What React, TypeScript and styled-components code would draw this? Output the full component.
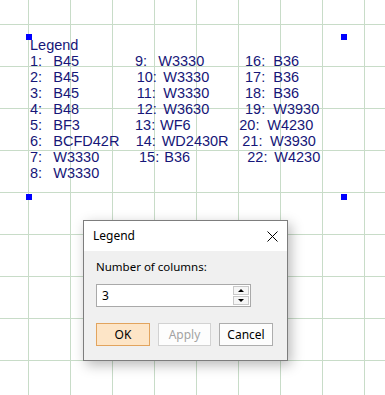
import React from 'react';
import styled, { createGlobalStyle } from 'styled-components';

const Global = createGlobalStyle`
  html, body { margin: 0; padding: 0; }
  body { width: 385px; height: 395px; overflow: hidden; background: #fff; }
`;

const Canvas = styled.div`
  position: relative;
  width: 385px;
  height: 395px;
  box-sizing: border-box;
  padding: 37px 0 0 30px;
  background-color: #fff;
  background-image:
    linear-gradient(to right, #c8dcc8 1px, transparent 1px),
    linear-gradient(to bottom, #c8dcc8 1px, transparent 1px);
  background-size: 42px 42px;
  background-position: 28px 24px;
  font-family: "Liberation Sans", Arial, sans-serif;
`;

const LegendBlock = styled.div`
  color: #161678;
  font-size: 14.5px;
  line-height: 16px;
`;

const LegendTitle = styled.div`
  white-space: nowrap;
`;

const Columns = styled.div`
  display: grid;
  grid-template-columns: 103px 106px auto;
`;

const Column = styled.div`
  display: flex;
  flex-direction: column;
`;

const Entry = styled.div<{ $indent: number }>`
  display: flex;
  white-space: nowrap;
  padding-left: ${(p) => p.$indent}px;
`;

const Num = styled.span<{ $w: number }>`
  flex: none;
  width: ${(p) => p.$w}px;
`;

const Handle = styled.div<{ $x: number; $y: number }>`
  position: absolute;
  left: ${(p) => p.$x}px;
  top: ${(p) => p.$y}px;
  width: 6px;
  height: 6px;
  background: #0000ff;
`;

const Dialog = styled.div`
  position: absolute;
  left: 83px;
  top: 220px;
  width: 205px;
  height: 141px;
  box-sizing: border-box;
  border: 1px solid #7d7d7d;
  background: #f0f0f0;
  box-shadow: 3px 4px 12px rgba(0, 0, 0, 0.28);
  display: flex;
  flex-direction: column;
  font-family: "Noto Sans", "Open Sans", sans-serif;
  font-size: 11.5px;
  color: #000;
`;

const TitleBar = styled.div`
  height: 30px;
  flex: none;
  background: #fff;
  display: flex;
  align-items: center;
  justify-content: space-between;
  padding: 0 9px 0 9px;
`;

const TitleText = styled.span`
  font-size: 12px;
  padding-bottom: 1px;
`;

const CloseIcon = styled.svg`
  width: 11px;
  height: 11px;
  display: block;
`;

const Body = styled.div`
  display: flex;
  flex-direction: column;
  padding: 8px 0 0 12px;
`;

const Label = styled.div`
  line-height: 16px;
  height: 16px;
`;

const SpinBox = styled.div`
  margin-top: 9px;
  width: 155px;
  height: 23px;
  box-sizing: border-box;
  border: 1px solid #a9a9a9;
  background: #fff;
  display: flex;
  align-items: stretch;
`;

const SpinValue = styled.div`
  flex: 1;
  display: flex;
  align-items: center;
  padding-left: 5px;
  font-size: 12px;
`;

const SpinButtons = styled.div`
  width: 16px;
  display: flex;
  flex-direction: column;
  gap: 1px;
  padding: 1px 1px 1px 0;
`;

const SpinButton = styled.div`
  flex: 1;
  box-sizing: border-box;
  border: 1px solid #c9c9c9;
  background: #f6f6f6;
  display: flex;
  align-items: center;
  justify-content: center;
`;

const Arrow = styled.div<{ $up: boolean }>`
  width: 0;
  height: 0;
  border-left: 3px solid transparent;
  border-right: 3px solid transparent;
  ${(p) => (p.$up ? 'border-bottom: 3px solid #000;' : 'border-top: 3px solid #000;')}
`;

const ButtonRow = styled.div`
  margin-top: 16px;
  display: flex;
  gap: 8px;
`;

const Button = styled.div<{ $kind: 'default' | 'disabled' | 'normal'; $w: number }>`
  width: ${(p) => p.$w}px;
  height: 23px;
  box-sizing: border-box;
  display: flex;
  align-items: center;
  justify-content: center;
  font-size: 12px;
  border: 1px solid
    ${(p) => (p.$kind === 'default' ? '#e2a45e' : p.$kind === 'disabled' ? '#d2d2d2' : '#adadad')};
  background: ${(p) => (p.$kind === 'default' ? '#fde5c7' : '#fdfdfd')};
  color: ${(p) => (p.$kind === 'disabled' ? '#a3a3a3' : '#000')};
`;

type Item = [string, string, number, number];

const columns: Item[][] = [
  [
    ['1:', 'B45', 30, 53.3],
    ['2:', 'B45', 30, 53.3],
    ['3:', 'B45', 30, 53.3],
    ['4:', 'B48', 30, 53.3],
    ['5:', 'BF3', 30, 53.3],
    ['6:', 'BCFD42R', 30, 53.3],
    ['7:', 'W3330', 30, 53.3],
    ['8:', 'W3330', 30, 53.3],
  ],
  [
    ['9:', 'W3330', 135, 158.3],
    ['10:', 'W3330', 136.7, 163.3],
    ['11:', 'W3330', 136.7, 163.3],
    ['12:', 'W3630', 136.7, 163.3],
    ['13:', 'WF6', 135, 160],
    ['14:', 'WD2430R', 135.7, 161.7],
    ['15:', 'B36', 139, 164.3],
  ],
  [
    ['16:', 'B36', 245, 273.3],
    ['17:', 'B36', 245, 273.3],
    ['18:', 'B36', 245, 273.3],
    ['19:', 'W3930', 245, 273.3],
    ['20:', 'W4230', 239.3, 267.3],
    ['21:', 'W3930', 242.3, 270],
    ['22:', 'W4230', 247.3, 274.3],
  ],
];

const colStarts = [30, 133, 239];

export default function App() {
  return (
    <>
      <Global />
      <Canvas>
        <LegendBlock>
          <LegendTitle>Legend</LegendTitle>
          <Columns>
            {columns.map((col, ci) => (
              <Column key={ci}>
                {col.map(([n, name, nx, namex]) => (
                  <Entry key={n} $indent={nx - colStarts[ci]}>
                    <Num $w={namex - nx}>{n}</Num>
                    <span>{name}</span>
                  </Entry>
                ))}
              </Column>
            ))}
          </Columns>
        </LegendBlock>

        <Handle $x={26} $y={34} />
        <Handle $x={341} $y={34} />
        <Handle $x={26} $y={194} />
        <Handle $x={341} $y={194} />

        <Dialog>
          <TitleBar>
            <TitleText>Legend</TitleText>
            <CloseIcon viewBox="0 0 11 11">
              <path d="M0.5 0.5 L10.5 10.5 M10.5 0.5 L0.5 10.5" stroke="#000" strokeWidth="1" fill="none" />
            </CloseIcon>
          </TitleBar>
          <Body>
            <Label>Number of columns:</Label>
            <SpinBox>
              <SpinValue>3</SpinValue>
              <SpinButtons>
                <SpinButton>
                  <Arrow $up />
                </SpinButton>
                <SpinButton>
                  <Arrow $up={false} />
                </SpinButton>
              </SpinButtons>
            </SpinBox>
            <ButtonRow>
              <Button $kind="default" $w={54}>OK</Button>
              <Button $kind="disabled" $w={53}>Apply</Button>
              <Button $kind="normal" $w={54}>Cancel</Button>
            </ButtonRow>
          </Body>
        </Dialog>
      </Canvas>
    </>
  );
}
